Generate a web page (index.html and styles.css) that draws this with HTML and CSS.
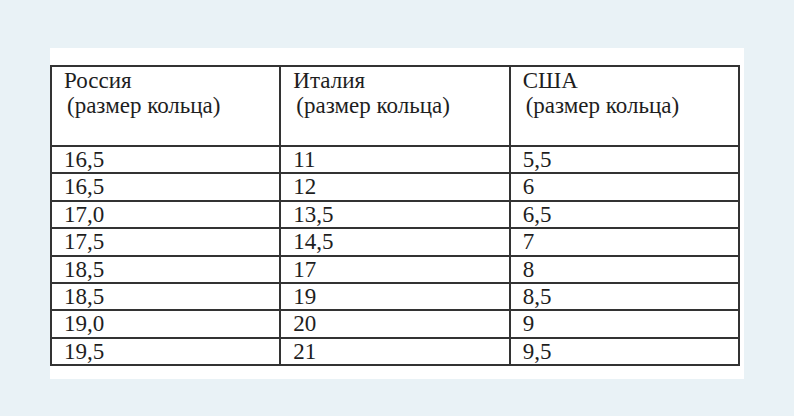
FILE: index.html
```html
<!DOCTYPE html>
<html lang="ru">
<head>
<meta charset="utf-8">
<title>Размеры колец</title>
<link rel="stylesheet" href="styles.css">
</head>
<body>
<div class="panel">
  <table class="sizes">
    <thead>
      <tr>
        <th><span class="country">Россия</span><span class="unit">(размер кольца)</span></th>
        <th><span class="country">Италия</span><span class="unit">(размер кольца)</span></th>
        <th><span class="country">США</span><span class="unit">(размер кольца)</span></th>
      </tr>
    </thead>
    <tbody>
      <tr><td>16,5</td><td>11</td><td>5,5</td></tr>
      <tr><td>16,5</td><td>12</td><td>6</td></tr>
      <tr><td>17,0</td><td>13,5</td><td>6,5</td></tr>
      <tr><td>17,5</td><td>14,5</td><td>7</td></tr>
      <tr><td>18,5</td><td>17</td><td>8</td></tr>
      <tr><td>18,5</td><td>19</td><td>8,5</td></tr>
      <tr><td>19,0</td><td>20</td><td>9</td></tr>
      <tr><td>19,5</td><td>21</td><td>9,5</td></tr>
    </tbody>
  </table>
</div>
</body>
</html>
```
FILE: styles.css
```css
html, body {
  margin: 0;
  padding: 0;
  background: #e9f2f6;
}

body {
  padding-top: 48px;
  padding-left: 50px;
  font-family: "Liberation Serif", "Tinos", "DejaVu Serif", serif;
  color: #1e1e1e;
}

.panel {
  width: 694px;
  height: 331px;
  box-sizing: border-box;
  background: #ffffff;
  padding: 17px 0 0 0;
}

.sizes {
  border-collapse: collapse;
  table-layout: fixed;
  width: 690px;
  font-family: "Liberation Serif", "Tinos", "DejaVu Serif", serif;
  font-size: 23px;
  line-height: 25px;
}

.sizes th,
.sizes td {
  border: 2px solid #333333;
  padding: 0 10px 0 12px;
  text-align: left;
  vertical-align: top;
  font-weight: normal;
}

.sizes th {
  height: 77px;
  padding-top: 1px;
}

.sizes td {
  height: 25.4px;
  line-height: 25.4px;
}

.country,
.unit {
  display: block;
}

.unit {
  padding-left: 3px;
}
```
